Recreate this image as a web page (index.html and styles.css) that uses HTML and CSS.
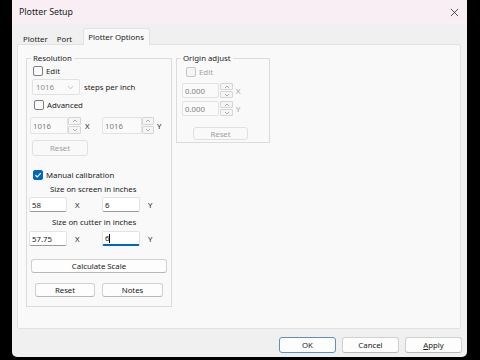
FILE: index.html
```html
<!DOCTYPE html>
<html>
<head>
<meta charset="utf-8">
<link rel="stylesheet" href="styles.css">
</head>
<body>
<div class="window">
  <div class="titlebar">
    <span class="title">Plotter Setup</span>
    <svg class="close" viewBox="0 0 10 10"><path d="M1 1L9 9M9 1L1 9" stroke="#2b2b2b" stroke-width="0.9" fill="none"/></svg>
  </div>
  <div class="tabs">
    <div class="tab">Plotter</div>
    <div class="tab port">Port</div>
    <div class="tab sel">Plotter Options</div>
  </div>
  <div class="panel">
    <fieldset class="group res">
      <legend>Resolution</legend>
      <div class="row r1 chk"><span class="cb"></span><span>Edit</span></div>
      <div class="row r2">
        <div class="combo dis"><span>1016</span><svg class="chev" viewBox="0 0 8 5"><path d="M1 1L4 4L7 1" stroke="#a8a8a8" stroke-width="0.8" fill="none"/></svg></div>
        <span class="lbl">steps per inch</span>
      </div>
      <div class="row r3 chk"><span class="cb"></span><span>Advanced</span></div>
      <div class="row r4">
        <div class="tb dis w38">1016</div>
        <div class="spin"><span class="sb"><svg viewBox="0 0 6 4"><path d="M1 3L3 1L5 3" stroke="#909090" stroke-width="0.7" fill="none"/></svg></span><span class="sb"><svg viewBox="0 0 6 4"><path d="M1 1L3 3L5 1" stroke="#909090" stroke-width="0.7" fill="none"/></svg></span></div>
        <span class="axis ax1">X</span>
        <div class="tb dis w40">1016</div>
        <div class="spin s12"><span class="sb"><svg viewBox="0 0 6 4"><path d="M1 3L3 1L5 3" stroke="#909090" stroke-width="0.7" fill="none"/></svg></span><span class="sb"><svg viewBox="0 0 6 4"><path d="M1 1L3 3L5 1" stroke="#909090" stroke-width="0.7" fill="none"/></svg></span></div>
        <span class="axis ax2">Y</span>
      </div>
      <button class="btn dis r5">Reset</button>
      <div class="row r6 chk"><span class="cb on"><svg viewBox="0 0 10 10"><path d="M2.3 5.2L4.2 7L7.8 3.2" stroke="#fff" stroke-width="1.2" fill="none"/></svg></span><span>Manual calibration</span></div>
      <div class="cap c1">Size on screen in inches</div>
      <div class="row r8">
        <div class="tb w38">58</div>
        <span class="axis ax3">X</span>
        <div class="tb w38">6</div>
        <span class="axis ax4">Y</span>
      </div>
      <div class="cap c2">Size on cutter in inches</div>
      <div class="row r10">
        <div class="tb w38">57.75</div>
        <span class="axis ax3">X</span>
        <div class="tb w38 focus">6<span class="caret"></span></div>
        <span class="axis ax4">Y</span>
      </div>
      <button class="btn r11">Calculate Scale</button>
      <div class="row r12">
        <button class="btn b60">Reset</button>
        <button class="btn b61">Notes</button>
      </div>
    </fieldset>
    <fieldset class="group origin">
      <legend>Origin adjust</legend>
      <div class="row o1 chk dtext"><span class="cb dcb"></span><span>Edit</span></div>
      <div class="row o2">
        <div class="tb dis w37">0.000</div>
        <div class="spin s13"><span class="sb"><svg viewBox="0 0 6 4"><path d="M1 3L3 1L5 3" stroke="#909090" stroke-width="0.7" fill="none"/></svg></span><span class="sb"><svg viewBox="0 0 6 4"><path d="M1 1L3 3L5 1" stroke="#909090" stroke-width="0.7" fill="none"/></svg></span></div>
        <span class="axis ax5 dtext">X</span>
      </div>
      <div class="row o3">
        <div class="tb dis w37">0.000</div>
        <div class="spin s13"><span class="sb"><svg viewBox="0 0 6 4"><path d="M1 3L3 1L5 3" stroke="#909090" stroke-width="0.7" fill="none"/></svg></span><span class="sb"><svg viewBox="0 0 6 4"><path d="M1 1L3 3L5 1" stroke="#909090" stroke-width="0.7" fill="none"/></svg></span></div>
        <span class="axis ax5 dtext">Y</span>
      </div>
      <button class="btn dis o4">Reset</button>
    </fieldset>
  </div>
  <div class="footer">
    <button class="btn fb ok">OK</button>
    <button class="btn fb">Cancel</button>
    <button class="btn fb"><u>A</u>pply</button>
  </div>
</div>
</body>
</html>
```
FILE: styles.css
```css
* { box-sizing: border-box; }
body {
  margin: 0;
  background: #000;
  width: 480px;
  height: 360px;
  overflow: hidden;
  font-family: "Noto Sans", "Liberation Sans", sans-serif;
  font-size: 7.8px;
  line-height: 10px;
  color: #1b1b1b;
}
.window {
  margin-left: 12px;
  width: 455px;
  height: 357px;
  background: #f0f0f0;
  display: flex;
  flex-direction: column;
  border-radius: 0 0 5px 5px;
  overflow: hidden;
}
.titlebar {
  height: 24px;
  flex: none;
  background: #f8eef3;
  display: flex;
  align-items: center;
  justify-content: space-between;
  padding: 0 8px 0 7px;
}
.title { font-size: 8.8px; color: #1a1a1a; }
.close { width: 9px; height: 9px; }

.tabs {
  height: 20px;
  flex: none;
  display: flex;
  align-items: flex-end;
  padding-left: 5px;
  position: relative;
  z-index: 1;
}
.tab {
  height: 14px;
  line-height: 18px;
  padding: 0 4px 0 6px;
  white-space: nowrap;
}
.tab.port { padding: 0 4px 0 5px; }
.tab.sel {
  margin-left: 7px;
  height: 17px;
  margin-bottom: -1px;
  background: #f9f9f9;
  border: 1px solid #e1e1e1;
  border-bottom: none;
  border-radius: 3px 3px 0 0;
  padding: 0 5px 0 4px;
  line-height: 16px;
}
.panel {
  flex: none;
  height: 285px;
  margin: 0 6px 0 5px;
  background: #f9f9f9;
  border: 1px solid #e1e1e1;
  border-radius: 0 2px 2px 2px;
  display: flex;
  align-items: flex-start;
  padding-left: 8px;
  gap: 4px;
}
.group {
  margin: 8px 0 0 0;
  padding: 0;
  border: 1px solid #dcdcdc;
  min-width: 0;
  display: flex;
  flex-direction: column;
  align-items: flex-start;
}
.group legend {
  padding: 0 2px;
  margin-left: 4px;
  line-height: 10px;
}
.res { width: 146px; padding-bottom: 9px; }
.origin { width: 94px; padding-bottom: 2px; }

.row { display: flex; align-items: center; white-space: nowrap; }
.chk { height: 12px; gap: 3px; }
.cb {
  width: 10px;
  height: 10px;
  border: 1px solid #7f7f7f;
  border-radius: 2px;
  background: #fbfbfb;
  flex: none;
  display: flex;
}
.cb svg { width: 10px; height: 10px; margin: -1px; }
.cb.on { background: #0067c0; border-color: #0067c0; }
.cb.dcb { border-color: #c6c6c6; background: #f5f5f5; }
.dtext { color: #a3a3a3; }

.r1 { margin: 2px 0 0 6px; }
.r2 { margin: 2px 0 0 5px; height: 16px; gap: 4px; }
.r3 { margin: 4px 0 0 7px; }
.r4 { margin: 6px 0 0 3px; height: 17px; }
.r5 { margin: 6px 0 0 5px; width: 56px; height: 16px; }
.r6 { margin: 13px 0 0 6px; }
.c1 { margin-top: 3px; padding-left: 23px; height: 10px; white-space: nowrap; }
.r8 { margin: 3px 0 0 2px; height: 15px; }
.c2 { margin-top: 5px; padding-left: 25px; height: 10px; white-space: nowrap; }
.r10 { margin: 4px 0 0 2px; height: 15px; }
.r11 { margin: 13px 0 0 4px; width: 136px; height: 14px; }
.r12 { margin: 10px 0 0 8px; height: 14px; gap: 7px; }
.b60 { width: 60px; height: 14px; }
.b61 { width: 61px; height: 14px; }

.o1 { margin: 3px 0 0 9px; }
.o2 { margin: 5px 0 0 5px; height: 15px; }
.o3 { margin: 3px 0 0 5px; height: 15px; }
.o4 { margin: 11px 0 0 16px; width: 55px; height: 13px; }

.combo {
  width: 48px;
  height: 16px;
  border: 1px solid #e2e2e2;
  border-radius: 2px;
  background: #fafafa;
  display: flex;
  align-items: center;
  justify-content: space-between;
  padding: 0 5px 0 3px;
}
.combo.dis { color: #8c8c8c; }
.chev { width: 7px; height: 5px; }

.tb {
  height: 100%;
  border: 1px solid #e3e3e3;
  border-bottom-color: #9a9a9a;
  border-radius: 2px;
  background: #fff;
  padding-left: 2px;
  display: flex;
  align-items: center;
}
.tb.dis {
  background: #fafafa;
  border-color: #e3e3e3;
  color: #7c7c7c;
}
.tb.focus { border-bottom: 2px solid #0067c0; }
.caret { width: 1px; height: 9px; background: #000; }
.w37 { width: 37px; }
.w38 { width: 38px; }
.w40 { width: 40px; }

.spin {
  width: 13px;
  height: 100%;
  display: flex;
  flex-direction: column;
  gap: 1px;
}
.spin.s12 { width: 12px; }
.spin.s13 { margin-left: 1px; }
.sb {
  flex: 1;
  border: 1px solid #d6d6d6;
  border-radius: 1px;
  background: #f5f5f5;
  display: flex;
  align-items: center;
  justify-content: center;
}
.sb svg { width: 6px; height: 4px; }

.axis { display: block; }
.ax1 { width: 21px; padding-left: 4px; }
.ax2 { padding-left: 3px; }
.ax3 { width: 35px; padding-left: 8px; }
.ax4 { padding-left: 8px; }
.ax5 { padding-left: 3px; }

.btn {
  font: inherit;
  color: #1b1b1b;
  padding: 0;
  border: 1px solid #d0d0d0;
  border-bottom-color: #b8b8b8;
  border-radius: 3px;
  background: #fdfdfd;
  text-align: center;
  line-height: 10px;
  flex: none;
}
.btn.dis {
  color: #a0a0a0;
  border-color: #e0e0e0;
  background: #f9f9f9;
}
.btn u { text-decoration: underline; text-underline-offset: 1px; }

.footer {
  flex: none;
  display: flex;
  justify-content: flex-end;
  gap: 6px;
  padding: 8px 5px 0 0;
}
.fb { width: 57px; height: 16px; }
.ok { border-color: #5f8fbf; }
```
